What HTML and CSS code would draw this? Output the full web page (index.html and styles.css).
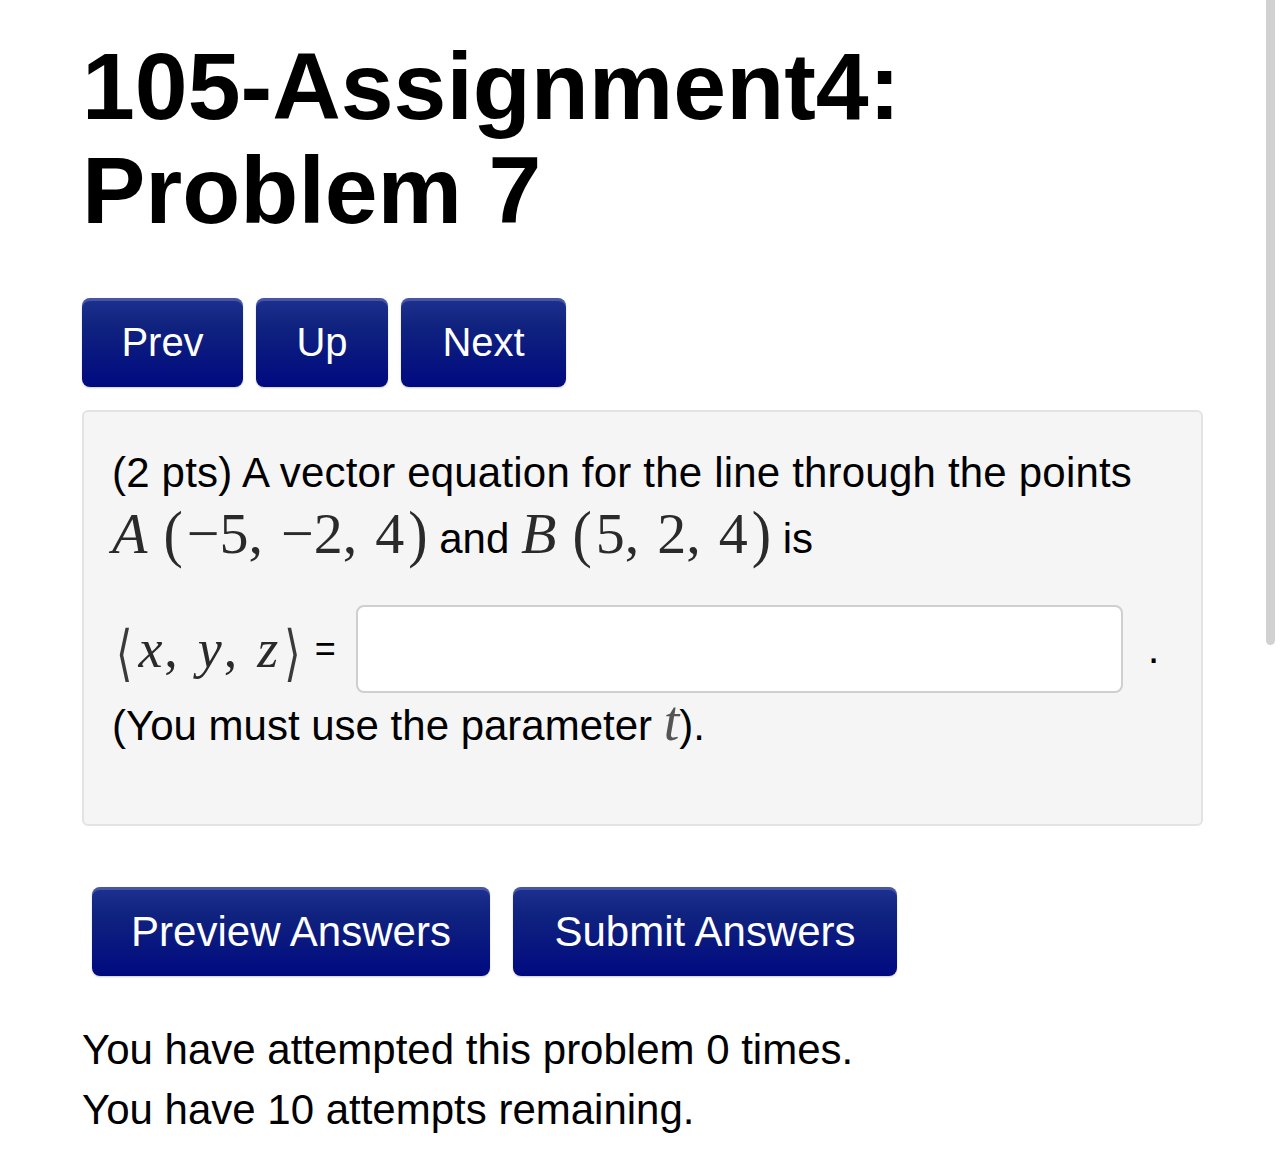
FILE: index.html
```html
<!DOCTYPE html>
<html>
<head>
<meta charset="utf-8">
<link rel="stylesheet" href="styles.css">
</head>
<body>
<div class="page">
  <h1 class="title">105-Assignment4:<br>Problem 7</h1>
  <div class="nav">
    <a class="btn nav-btn prev">Prev</a>
    <a class="btn nav-btn up">Up</a>
    <a class="btn nav-btn next">Next</a>
  </div>
  <div class="problem">
    <div class="line1">(2 pts) A vector equation for the line through the points</div>
    <div class="line2"><span class="math"><i class="pt">A</i><span class="lp">(</span>−5,<span class="sp"></span>−2,<span class="sp"></span>4<span class="rp">)</span></span> and <span class="math"><i class="pt">B</i><span class="lp">(</span>5,<span class="sp"></span>2,<span class="sp"></span>4<span class="rp">)</span></span> is</div>
    <div class="answer-row">
      <span class="math vec"><span class="angle">⟨</span><i>x</i>,<span class="sp"></span><i>y</i>,<span class="sp"></span><i>z</i><span class="angle">⟩</span></span><span class="eq">=</span>
      <div class="input"></div>
      <span class="dot">.</span>
    </div>
    <div class="note">(You must use the parameter <span class="math"><i>t</i></span>).</div>
  </div>
  <div class="actions">
    <a class="btn act-btn preview">Preview Answers</a>
    <a class="btn act-btn submit">Submit Answers</a>
  </div>
  <div class="attempts">
    <p>You have attempted this problem 0 times.</p>
    <p>You have 10 attempts remaining.</p>
  </div>
</div>
<div class="scrollbar"></div>
</body>
</html>
```
FILE: styles.css
```css
html, body {
  margin: 0;
  padding: 0;
  background: #ffffff;
}
body {
  font-family: "Liberation Sans", Arial, Helvetica, sans-serif;
  color: #000;
}
.page {
  padding: 0 0 0 82px;
  width: 1121px;
}
.title {
  margin: 0;
  padding-top: 34px;
  font-size: 95px;
  line-height: 104px;
  font-weight: bold;
}
.nav {
  display: flex;
  gap: 13px;
  margin-top: 56px;
}
.btn {
  display: flex;
  align-items: center;
  justify-content: center;
  color: #fff;
  background: linear-gradient(to bottom, #1e3191 0%, #10237f 30%, #000a80 100%);
  border-radius: 8px;
  box-shadow: inset 0 3px 0 rgba(255,255,255,0.18), 0 1px 2px rgba(0,0,0,0.2);
  box-sizing: border-box;
}
.nav-btn {
  height: 89px;
  font-size: 40px;
}
.prev { width: 161px; }
.up { width: 132px; }
.next { width: 165px; }
.problem {
  margin-top: 23px;
  background: #f5f5f5;
  border: 2px solid #e3e3e3;
  border-radius: 6px;
  box-sizing: border-box;
  height: 416px;
  padding: 36px 28px 0 28px;
  font-size: 42px;
}
.line1 {
  line-height: 50px;
  letter-spacing: 0.2px;
}
.line2 {
  line-height: 62px;
  padding-top: 5px;
}
.math {
  font-family: "Liberation Serif", "Times New Roman", serif;
  font-size: 58px;
  color: #2a2a2a;
}
.math i {
  font-style: italic;
}
.math .sp {
  display: inline-block;
  width: 18px;
}
.pt {
  margin-right: 16px;
}
.lp {
  display: inline-block;
  transform: scaleY(1.1);
  margin-right: 4px;
}
.rp {
  display: inline-block;
  transform: scaleY(1.1);
  margin-left: 4px;
}
.answer-row {
  display: flex;
  align-items: center;
  margin-top: 35px;
  height: 88px;
}
.vec {
  font-size: 54px;
  display: flex;
  align-items: baseline;
}
.vec .sp {
  width: 18px;
}
.vec i {
  margin: 0 2px;
}
.angle {
  display: inline-block;
  transform: scaleY(1.45);
  font-family: "DejaVu Serif", serif;
  font-size: 42px;
  color: #3a3a3a;
  margin: 0 4px;
}
.eq {
  margin-left: 10px;
  font-size: 36px;
}
.input {
  margin-left: 20px;
  width: 767px;
  height: 88px;
  background: #fff;
  border: 2px solid #cfcfcf;
  border-radius: 8px;
  box-sizing: border-box;
}
.dot {
  margin-left: 25px;
  font-size: 42px;
}
.note {
  margin-top: -2px;
  line-height: 60px;
}
.note .math {
  font-size: 56px;
  color: #555;
}
.actions {
  display: flex;
  gap: 23px;
  margin-top: 61px;
  margin-left: 10px;
}
.act-btn {
  height: 89px;
  font-size: 42px;
}
.preview { width: 398px; }
.submit { width: 384px; }
.attempts {
  margin-top: 44px;
  font-size: 42px;
}
.attempts p {
  margin: 0;
  line-height: 60px;
}
.scrollbar {
  position: fixed;
  top: 0;
  left: 1266px;
  width: 9px;
  height: 645px;
  background: #d1d1d1;
  border-radius: 0 0 5px 5px;
}
```
